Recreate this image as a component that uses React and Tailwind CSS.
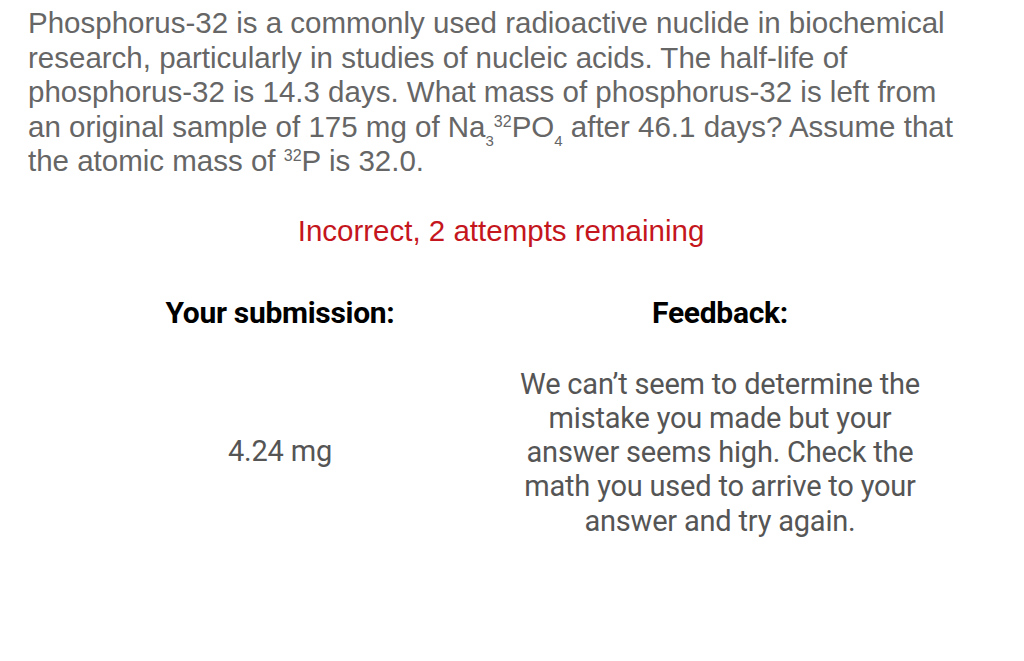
export default function App() {
  return (
    <div className="min-h-[661px] w-[1024px] bg-white">
      {/* Question */}
      <div className="pl-[28px] pt-[6px] font-['Liberation_Sans',Arial,sans-serif] text-[29.5px] leading-[34.5px] text-[#666666]">
        <p className="whitespace-nowrap">
          Phosphorus-32 is a commonly used radioactive nuclide in biochemical<br />
          research, particularly in studies of nucleic acids. The half-life of<br />
          phosphorus-32 is 14.3 days. What mass of phosphorus-32 is left from<br />
          an original sample of 175 mg of Na
          <sub className="-bottom-[9px] text-[15px]">3</sub>
          <sup className="-top-[10px] text-[16px]">32</sup>PO
          <sub className="-bottom-[9px] text-[15px]">4</sub> after 46.1 days? Assume that<br />
          the atomic mass of <sup className="-top-[10px] text-[16px]">32</sup>P is 32.0.
        </p>
      </div>

      {/* Status */}
      <p className="mt-[35px] pr-[22px] text-center font-['Liberation_Sans',Arial,sans-serif] text-[29.5px] leading-[34px] text-[#c4161c]">
        Incorrect, 2 attempts remaining
      </p>

      {/* Result table */}
      <div className="mt-[48px] grid grid-cols-[440px_440px] pl-[60px] font-['Roboto',sans-serif]">
        <h3 className="text-center text-[30px] font-bold leading-[34px] tracking-[-0.3px] text-black">Your submission:</h3>
        <h3 className="text-center text-[30px] font-bold leading-[34px] tracking-[-0.3px] text-black">Feedback:</h3>
        <div className="mt-[37px] flex items-center justify-center text-[29px] tracking-[-0.2px] text-[#555555]">4.24 mg</div>
        <p className="mt-[37px] text-center text-[29px] leading-[34.25px] tracking-[-0.2px] text-[#555555]">
          We can’t seem to determine the<br />
          mistake you made but your<br />
          answer seems high. Check the<br />
          math you used to arrive to your<br />
          answer and try again.
        </p>
      </div>
    </div>
  );
}
